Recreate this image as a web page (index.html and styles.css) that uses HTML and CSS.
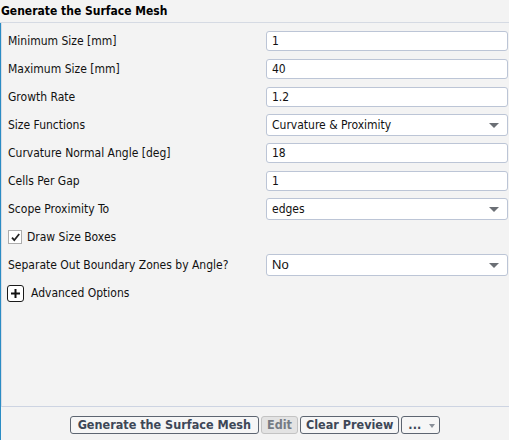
FILE: index.html
```html
<!DOCTYPE html>
<html>
<head>
<meta charset="utf-8">
<link rel="stylesheet" href="styles.css">
</head>
<body>
<div class="panel">
  <div class="title">Generate the Surface Mesh</div>
  <div class="frame">
    <div class="scroll">
      <div class="row">
        <span class="label">Minimum Size [mm]</span>
        <div class="field">1</div>
      </div>
      <div class="row">
        <span class="label">Maximum Size [mm]</span>
        <div class="field">40</div>
      </div>
      <div class="row">
        <span class="label">Growth Rate</span>
        <div class="field">1.2</div>
      </div>
      <div class="row">
        <span class="label">Size Functions</span>
        <div class="field select">Curvature &amp; Proximity<span class="caret"></span></div>
      </div>
      <div class="row">
        <span class="label">Curvature Normal Angle [deg]</span>
        <div class="field">18</div>
      </div>
      <div class="row">
        <span class="label">Cells Per Gap</span>
        <div class="field">1</div>
      </div>
      <div class="row">
        <span class="label">Scope Proximity To</span>
        <div class="field select">edges<span class="caret"></span></div>
      </div>
      <div class="row check-row">
        <span class="checkbox">
          <svg width="11" height="11" viewBox="0 0 11 11"><path d="M2 5.6 L4.3 8.2 L9.2 2" fill="none" stroke="#222" stroke-width="1.8"/></svg>
        </span>
        <span class="label">Draw Size Boxes</span>
      </div>
      <div class="row">
        <span class="label">Separate Out Boundary Zones by Angle?</span>
        <div class="field select plain">No<span class="caret"></span></div>
      </div>
      <div class="row check-row">
        <span class="expander">
          <svg width="11" height="11" viewBox="0 0 11 11"><path d="M5.5 1 V10 M1 5.5 H10" stroke="#111" stroke-width="2"/></svg>
        </span>
        <span class="label">Advanced Options</span>
      </div>
    </div>
    <div class="footer">
      <button class="btn wide">Generate the Surface Mesh</button>
      <button class="btn disabled">Edit</button>
      <button class="btn">Clear Preview</button>
      <button class="btn more">...<span class="caret small"></span></button>
    </div>
  </div>
</div>
</body>
</html>
```

FILE: styles.css
```css
html, body {
  margin: 0;
  padding: 0;
}

body {
  width: 509px;
  height: 440px;
  background: #f3f3f3;
  font-family: "DejaVu Sans Condensed", "DejaVu Sans", sans-serif;
  font-size: 12px;
  color: #111;
  overflow: hidden;
}

.panel {
  display: flex;
  flex-direction: column;
  height: 440px;
}

.title {
  height: 22px;
  line-height: 22px;
  padding-left: 1px;
  font-weight: bold;
  font-size: 12px;
  color: #000;
  border-bottom: 1px solid #d5dae3;
}

.frame {
  flex: 1;
  display: flex;
  flex-direction: column;
  border-left: 1px solid #2a8cc4;
}

.scroll {
  flex: 1;
  padding: 4px 1px 0 6px;
  border-left: 1px solid #d8dde6;
  border-bottom: 1px solid #cdd4e2;
}

.row {
  height: 28px;
  display: grid;
  grid-template-columns: 1fr 242px;
  align-items: center;
}

.label {
  white-space: nowrap;
}

.field {
  position: relative;
  height: 18px;
  line-height: 18px;
  padding-left: 5px;
  background: #fff;
  border: 1px solid #bcc5d6;
  border-radius: 3px;
  color: #111;
}

.field.select {
  height: 20px;
  line-height: 20px;
}

.field.plain {
  font-family: "Liberation Sans", Arial, sans-serif;
  font-size: 13px;
}

.caret {
  position: absolute;
  right: 8px;
  top: 8px;
  width: 0;
  height: 0;
  border-left: 5px solid transparent;
  border-right: 5px solid transparent;
  border-top: 5px solid #6b6f75;
}

.check-row {
  display: flex;
  align-items: center;
}

.checkbox {
  width: 12px;
  height: 12px;
  margin: 0 5px 0 0;
  border: 1px solid #adadad;
  background: #fff;
  display: flex;
  align-items: center;
  justify-content: center;
}

.expander {
  width: 15px;
  height: 15px;
  margin: 0 7px 0 -1px;
  border: 1.5px solid #1a1a1a;
  border-radius: 3px;
  background: #fff;
  display: flex;
  align-items: center;
  justify-content: center;
}

.footer {
  height: 33px;
  display: flex;
  justify-content: center;
  align-items: center;
  gap: 2px;
  padding-top: 2px;
  box-sizing: border-box;
}

.btn {
  height: 18px;
  padding: 0 5px;
  font-family: "DejaVu Sans Condensed", "DejaVu Sans", sans-serif;
  font-size: 12.5px;
  font-weight: bold;
  line-height: 16px;
  color: #3d4757;
  background: #f6f6f6;
  border: 1px solid #5d6571;
  border-radius: 3px;
}

.btn.wide {
  padding: 0 7px;
}

.btn.disabled {
  color: #757b84;
  background: #e3e3e3;
  border-color: #c3c3c3;
}

.btn.more {
  position: relative;
  width: 39px;
  text-align: left;
  padding-left: 6px;
}

.caret.small {
  right: 4px;
  top: 7px;
  border-left-width: 3.5px;
  border-right-width: 3.5px;
  border-top: 4px solid #8a9099;
}
```
